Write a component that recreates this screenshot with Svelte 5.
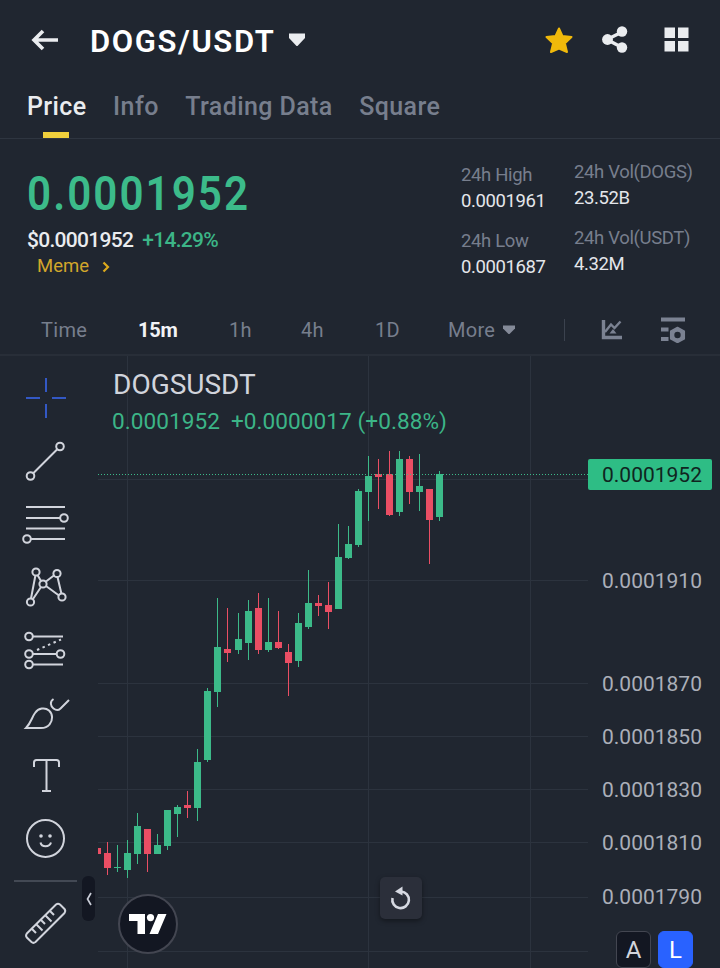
<script>
  const tabs = ['Price', 'Info', 'Trading Data', 'Square']
  const intervals = ['Time', '15m', '1h', '4h', '1D']

  let activeTab = $state('Price')
  let activeInterval = $state('15m')

  const stats = [
    [
      { label: '24h High', value: '0.0001961' },
      { label: '24h Low', value: '0.0001687' }
    ],
    [
      { label: '24h Vol(DOGS)', value: '23.52B' },
      { label: '24h Vol(USDT)', value: '4.32M' }
    ]
  ]

  // x, high, body top, body bottom, low, up
  const candles = [
    [107, 842, 853, 868, 875, 0],
    [117, 845, 867, 868, 872, 1],
    [127, 840, 853, 870, 878, 1],
    [137, 813, 826, 854, 864, 1],
    [147, 829, 829, 854, 872, 0],
    [157, 834, 845, 854, 854, 1],
    [167, 810, 810, 846, 850, 1],
    [177, 805, 807, 814, 837, 1],
    [187, 791, 805, 808, 818, 0],
    [197, 749, 762, 808, 821, 1],
    [207, 688, 691, 760, 762, 1],
    [217, 598, 647, 692, 707, 1],
    [227, 608, 649, 653, 662, 0],
    [238, 613, 639, 650, 654, 1],
    [248, 600, 611, 643, 660, 1],
    [258, 593, 608, 650, 654, 0],
    [268, 598, 642, 650, 652, 1],
    [278, 611, 642, 648, 649, 0],
    [288, 644, 652, 663, 696, 0],
    [298, 613, 623, 661, 667, 1],
    [308, 570, 603, 627, 629, 1],
    [318, 595, 603, 606, 616, 0],
    [328, 582, 605, 612, 629, 0],
    [338, 524, 557, 609, 609, 1],
    [348, 526, 544, 558, 559, 1],
    [358, 489, 491, 545, 547, 1],
    [368, 456, 476, 492, 521, 1],
    [378, 459, 474, 477, 509, 0],
    [389, 451, 474, 515, 516, 0],
    [399, 451, 459, 512, 516, 1],
    [409, 456, 459, 492, 504, 0],
    [419, 454, 486, 492, 511, 1],
    [429, 489, 489, 520, 564, 0],
    [439, 471, 474, 517, 521, 1]
  ]

  const gridRows = [479, 580, 683, 736, 789, 842, 897, 951]
  const gridCols = [127, 368, 530]

  const axis = [
    { y: 580, price: '0.0001910' },
    { y: 683, price: '0.0001870' },
    { y: 736, price: '0.0001850' },
    { y: 789, price: '0.0001830' },
    { y: 842, price: '0.0001810' },
    { y: 896, price: '0.0001790' }
  ]
</script>

<div class="screen">
  <header>
    <svg class="back" width="28" height="22" viewBox="0 0 28 22">
      <path d="M27 11H3M12 2L3 11l9 9" fill="none" stroke="#eaecef" stroke-width="3.6" />
    </svg>
    <h1>DOGS/USDT</h1>
    <svg class="caret" width="18" height="14" viewBox="0 0 18 14">
      <path d="M1 0.500h16V5L9.500 13h-1L1 5z" fill="#eaecef" />
    </svg>
    <div class="actions">
      <svg width="28" height="28" viewBox="0 0 28 28">
        <path
          d="M14 2.500l3.400 7.500 9.100 1-6.600 6.200 2.100 8.800L14 22.500 6 26l2.100-8.800L1.500 11l9.100-1z"
          fill="#f0b90b"
          stroke="#f0b90b"
          stroke-width="2"
          stroke-linejoin="round"
        />
      </svg>
      <svg width="28" height="28" viewBox="0 0 28 28">
        <path d="M21 6L6 13.500l15 8" fill="none" stroke="#eaecef" stroke-width="3.4" />
        <circle cx="21" cy="5.500" r="5.2" fill="#eaecef" />
        <circle cx="6.5" cy="13.500" r="5.400" fill="#eaecef" />
        <circle cx="21" cy="21.500" r="5.2" fill="#eaecef" />
      </svg>
      <svg width="26" height="26" viewBox="0 0 26 26">
        <path d="M0.500 0.500H11V11H0.500zM14 0.500h10.500V11H14zM0.500 14H11v10.500H0.500zM14 14h10.500v10.500H14z" fill="#eaecef" />
      </svg>
    </div>
  </header>

  <nav class="tabs">
    {#each tabs as tab (tab)}
      <button class:active={tab === activeTab} onclick={() => (activeTab = tab)}>{tab}</button>
    {/each}
  </nav>

  <section class="ticker">
    <div class="quote">
      <div class="last">0.0001952</div>
      <div class="fiat">
        <span class="usd">$0.0001952</span>
        <span class="change">+14.29%</span>
      </div>
      <div class="tag">
        Meme
        <svg width="8" height="12" viewBox="0 0 8 12">
          <path d="M1.5 1.5L6 6l-4.500 4.500" fill="none" stroke="#dba91c" stroke-width="2.2" />
        </svg>
      </div>
    </div>
    {#each stats as column, i (i)}
      <dl class:volume={i === 1}>
        {#each column as stat (stat.label)}
          <dt>{stat.label}</dt>
          <dd>{stat.value}</dd>
        {/each}
      </dl>
    {/each}
  </section>

  <nav class="intervals">
    {#each intervals as interval (interval)}
      <button class:active={interval === activeInterval} onclick={() => (activeInterval = interval)}>
        {interval}
      </button>
    {/each}
    <button class="more">
      More
      <svg width="12" height="10" viewBox="0 0 12 10">
        <path d="M0 0.500h12v3L6.500 9h-1L0 3.500z" fill="#848a98" />
      </svg>
    </button>
    <span class="divider"></span>
    <svg width="22" height="22" viewBox="0 0 22 22" fill="none" stroke="#7b8292">
      <path d="M2.500 1v17.500H21" stroke-width="3.400" />
      <path d="M4 13l6-7.500 3.500 3.500L19.500 2.500" stroke-width="2.400" />
      <path d="M8.500 14.500h7L12 10z" fill="#7b8292" stroke="none" />
    </svg>
    <svg width="26" height="26" viewBox="0 0 26 26">
      <path d="M1 0.500h24v4H1zM1 10.500h7.500v4H1zM1 20h7.500v4H1z" fill="#7b8292" />
      <path
        d="M17.500 10.500l6.800 3.700v7.600L17.500 25.500l-6.800-3.700v-7.600z"
        fill="#7b8292"
        stroke="#7b8292"
        stroke-width="1.500"
        stroke-linejoin="round"
      />
      <circle cx="17.500" cy="18" r="3.200" fill="#202630" />
    </svg>
  </nav>

  <main>
    <aside class="tools">
      <svg viewBox="0 0 46 46" fill="none" stroke="#3358c4" stroke-width="2">
        <path d="M23 3v14M23 29v14M3 23h14M29 23h14" />
      </svg>
      <svg viewBox="0 0 46 46">
        <path d="M10 35.500L34.500 11" />
        <circle cx="7.500" cy="38" r="3.800" />
        <circle cx="37" cy="8.500" r="3.800" />
      </svg>
      <svg viewBox="0 0 46 46">
        <path d="M3 6h39M3 17h34M3 27.500h39M8 38h34" />
        <circle cx="41" cy="17" r="3.800" />
        <circle cx="4" cy="38" r="3.800" />
      </svg>
      <svg viewBox="0 0 46 46">
        <path d="M12.400 11.500L8 34.500M14.500 11L18 17M23 17.500L31.500 11M34.500 13L38.500 30M23 22L36 31.500M18 23L10 35" />
        <circle cx="13" cy="8" r="3.600" />
        <circle cx="34" cy="9.500" r="3.600" />
        <circle cx="20" cy="20" r="3.600" />
        <circle cx="39" cy="33" r="3.600" />
        <circle cx="7.500" cy="38" r="3.600" />
      </svg>
      <svg viewBox="0 0 46 46">
        <path d="M10 9.500h30M10 27h23.500M10 37.500h30" />
        <path d="M14 23l24-10.500" stroke-dasharray="2.500 3.500" />
        <circle cx="6" cy="9.500" r="3.800" />
        <circle cx="6" cy="27" r="3.800" />
        <circle cx="37.500" cy="27" r="3.800" />
        <circle cx="6" cy="37.500" r="3.800" />
      </svg>
      <svg viewBox="0 0 46 46">
        <path d="M3 38C8 33 9 27 12 23c3.500-5 10-6 14-2.500 4 3.500 4 10 .5 14-2 2.500-5 3.500-8.500 3.500zM30.500 9c-4 2.500-3 7 0 9.500 2.500 2 5 2 7 0L46 10" />
      </svg>
      <svg viewBox="0 0 46 46">
        <path d="M11 14V9.500Q11 7 13.500 7h20Q36 7 36 9.500V14M23.500 7v31M19 38h9" />
      </svg>
      <svg viewBox="0 0 46 46">
        <circle cx="22.500" cy="22.500" r="18.500" />
        <circle class="dot" cx="18" cy="20" r="1.800" />
        <circle class="dot" cx="27" cy="20" r="1.800" />
        <path d="M17.500 26.500c1 5 9 5 10.500 0" />
      </svg>
      <hr />
      <svg viewBox="0 0 46 46">
        <path
          d="M3.800 33.500L33 4.500q2-1.500 4 0l4.500 4.500q1.500 1.800 0 4L12.500 42q-2.200 1.700-4 0l-4.700-4.500q-1.500-2 0-4zM9 29l4 4M13.500 24.500l6 6M18 20l4 4M22.500 15.500l6 6M27 11l4 4"
        />
      </svg>
    </aside>

    <div class="chart">
      <svg class="plot" width="622" height="612" viewBox="98 356 622 612">
        {#each gridRows as y (y)}
          <rect class="grid" x="98" {y} width="490" height="1" />
        {/each}
        {#each gridCols as x (x)}
          <rect class="grid" {x} y="356" width="1" height="612" />
        {/each}

        <rect class="down" x="98" y="848" width="3" height="6" />
        {#each candles as [x, high, top, bottom, low, up] (x)}
          <g class={up ? 'up' : 'down'}>
            <rect {x} y={high} width="1" height={low - high} />
            <rect x={x - 3} y={top} width="7" height={bottom - top} />
          </g>
        {/each}

        <path class="last-line" d="M98 474.500H588" />
        <rect x="588" y="459" width="124" height="31" rx="2" fill="#2ebd85" />
        <text class="last-label" x="602" y="482">0.0001952</text>

        {#each axis as { y, price } (price)}
          <text x="602" y={y + 8}>{price}</text>
        {/each}
      </svg>

      <div class="legend">
        <div class="symbol">DOGSUSDT</div>
        <div class="delta"><span>0.0001952</span><span>+0.0000017 (+0.88%)</span></div>
      </div>

      <button class="collapse" aria-label="Hide toolbar">
        <svg width="6" height="14" viewBox="0 0 6 14">
          <path d="M5 1L1.500 7 5 13" fill="none" stroke="#c8ccd6" stroke-width="1.700" />
        </svg>
      </button>

      <div class="brand">
        <svg width="38" height="20" viewBox="0 0 38 20" fill="#fff">
          <path d="M0 0h16v20H8.500V7H0zM29 0h8.500L29 20h-8.500z" />
          <circle cx="21.500" cy="3.600" r="3.600" />
        </svg>
      </div>

      <button class="reset" aria-label="Reset chart">
        <svg width="22" height="24" viewBox="0 0 22 24">
          <path d="M2.500 12A8.300 8.300 0 1 0 11 5.500" fill="none" stroke="#d6d9e2" stroke-width="2.600" />
          <path d="M5 5.500L12.500 0.500v9z" fill="#d6d9e2" />
        </svg>
      </button>

      <div class="scale">
        <button>A</button>
        <button class="on">L</button>
      </div>
    </div>
  </main>
</div>

<style>
  :global(body) {
    background: #202630;
  }

  .screen {
    width: 720px;
    height: 968px;
    overflow: hidden;
    background: #202630;
    color: #eaecef;
    font-family: Roboto, 'Liberation Sans', sans-serif;
  }

  button {
    margin: 0;
    padding: 0;
    border: none;
    background: none;
    color: inherit;
    font: inherit;
    letter-spacing: inherit;
  }

  svg {
    display: block;
    flex: none;
  }

  header {
    display: flex;
    align-items: center;
    height: 80px;
    padding: 0 30px 0 31px;
    box-sizing: border-box;
  }

  h1 {
    margin: 3px 14px 0 31px;
    width: 184px;
    font-size: 31px;
    font-weight: 600;
    letter-spacing: 1.6px;
    line-height: 40px;
    color: #fff;
    white-space: nowrap;
  }

  .actions {
    display: flex;
    align-items: center;
    margin-left: auto;
  }

  .actions svg:nth-child(2) {
    margin: 0 35px 0 28px;
  }

  .tabs {
    display: flex;
    gap: 26.5px;
    height: 58px;
    padding-left: 27px;
    border-bottom: 1px solid #2e3540;
  }

  .tabs button {
    position: relative;
    height: 54px;
    padding-bottom: 2px;
    font-size: 25px;
    font-weight: 500;
    letter-spacing: 0.4px;
    color: #777e8d;
    white-space: nowrap;
  }

  .tabs .active {
    color: #eaecef;
  }

  .tabs .active::after {
    content: '';
    position: absolute;
    left: 16px;
    bottom: -4px;
    width: 26px;
    height: 6px;
    background: #f0cf3c;
  }

  .ticker {
    display: flex;
    height: 167px;
  }

  .quote {
    width: 461px;
    padding: 27px 0 0 27px;
    box-sizing: border-box;
    flex: none;
  }

  /* narrowed to get close to DIN figures */
  .last {
    width: 260px;
    height: 56px;
    font-size: 49px;
    font-weight: 600;
    line-height: 56px;
    letter-spacing: 2.4px;
    transform: scaleX(0.86);
    transform-origin: left;
    color: #3cbb8a;
  }

  .fiat {
    display: flex;
    gap: 9px;
    margin-top: 4px;
    font-size: 21px;
    font-weight: 500;
    line-height: 28px;
    letter-spacing: -0.7px;
  }

  .change {
    color: #3cb587;
  }

  .tag {
    display: flex;
    align-items: center;
    gap: 13px;
    padding-left: 10px;
    font-size: 18.5px;
    line-height: 25px;
    color: #d3a62b;
  }

  dl {
    width: 113px;
    margin: 22px 0 0;
    flex: none;
    white-space: nowrap;
  }

  dl.volume {
    margin-top: 19px;
    width: 130px;
  }

  dt {
    height: 26px;
    font-size: 18.5px;
    line-height: 28px;
    letter-spacing: -0.35px;
    color: #777e8d;
  }

  dd {
    height: 40px;
    margin: 0;
    font-size: 18.5px;
    line-height: 28px;
    letter-spacing: -0.4px;
    color: #e4e6eb;
  }

  .intervals {
    display: grid;
    grid-template-columns: 97px 91px 72px 74px 73px 116px 37px 59px 26px;
    align-items: center;
    justify-items: start;
    height: 50px;
    padding-left: 41px;
    border-bottom: 2px solid #282e38;
    box-sizing: border-box;
    font-size: 20px;
    letter-spacing: 0.3px;
    color: #777e8d;
  }

  .intervals .active {
    font-weight: 700;
    letter-spacing: -0.2px;
    color: #f2f3f6;
  }

  .more {
    display: flex;
    align-items: center;
    gap: 8px;
  }

  .divider {
    width: 1px;
    height: 22px;
    background: #3b424e;
  }

  main {
    display: flex;
    height: 612px;
  }

  .tools {
    display: flex;
    flex-direction: column;
    width: 98px;
    padding: 19px 0 0 23px;
    box-sizing: border-box;
    gap: 17px;
    flex: none;
  }

  .tools svg {
    width: 46px;
    height: 46px;
    overflow: visible;
  }

  .tools svg:not(:first-child) {
    fill: none;
    stroke: #d1d4dc;
    stroke-width: 2;
  }

  .tools .dot {
    fill: #d1d4dc;
    stroke: none;
  }

  .tools hr {
    width: 63px;
    height: 2px;
    margin: 1px 0 1px -9px;
    border: none;
    background: #434954;
  }

  .chart {
    position: relative;
    width: 622px;
  }

  .grid {
    fill: #2c333e;
  }

  .up {
    fill: #3cba89;
  }

  .down {
    fill: #ea4e64;
  }

  .last-line {
    stroke: #3cba89;
    stroke-dasharray: 1 2;
  }

  .plot text {
    font-size: 21px;
    fill: #abafb9;
  }

  .plot .last-label {
    fill: #10251f;
  }

  .legend {
    position: absolute;
    top: 12px;
    left: 14px;
    white-space: nowrap;
  }

  .symbol {
    padding-left: 1px;
    font-size: 28px;
    line-height: 34px;
    color: #d1d4dc;
  }

  .delta {
    display: flex;
    gap: 11px;
    margin-top: 5px;
    font-size: 22.6px;
    line-height: 30px;
    letter-spacing: 0.05px;
    color: #3cb587;
  }

  .collapse {
    position: absolute;
    left: -16px;
    top: 520px;
    display: grid;
    place-items: center;
    width: 13px;
    height: 45px;
    border-radius: 6px;
    background: #131722;
  }

  .brand {
    position: absolute;
    left: 20px;
    top: 538px;
    display: grid;
    place-items: center;
    width: 60px;
    height: 60px;
    border: 2px solid #434651;
    border-radius: 50%;
    box-sizing: border-box;
    background: #131722;
  }

  .reset {
    position: absolute;
    left: 282px;
    top: 521px;
    display: grid;
    place-items: center;
    width: 42px;
    height: 42px;
    border-radius: 5px;
    background: #2b2f3a;
    box-shadow: 0 2px 5px rgba(0, 0, 0, 0.4);
  }

  .scale {
    position: absolute;
    left: 518px;
    top: 575px;
    display: flex;
    gap: 7px;
  }

  .scale button {
    width: 35px;
    height: 37px;
    border: 1px solid #434651;
    border-radius: 6px;
    box-sizing: border-box;
    background: #131722;
    font-size: 24px;
    color: #d1d4dc;
  }

  .scale .on {
    border-color: #2962ff;
    background: #2962ff;
    color: #fff;
  }
</style>
